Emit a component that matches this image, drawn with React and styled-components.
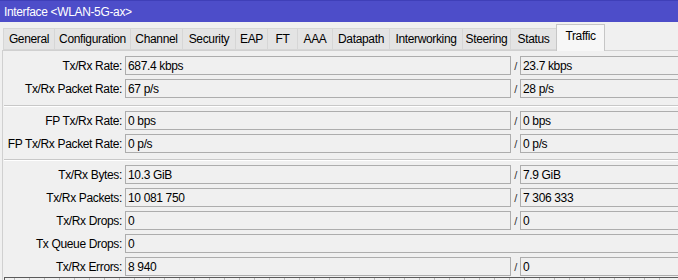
import React from "react";
import styled, { createGlobalStyle } from "styled-components";

const Global = createGlobalStyle`
  html, body { margin: 0; padding: 0; background: #f0f0f0; }
  body { width: 678px; height: 280px; overflow: hidden; }
  #root { width: 678px; height: 280px; overflow: hidden; }
`;

const Window = styled.div`
  width: 678px;
  height: 280px;
  background: #f0f0f0;
  font-family: "Liberation Sans", Arial, sans-serif;
  font-size: 12px;
  letter-spacing: -0.35px;
  color: #000;
  display: flex;
  flex-direction: column;
  overflow: hidden;
`;

const TitleBar = styled.div`
  height: 22px;
  flex: none;
  box-sizing: border-box;
  background: #4d4dc9;
  border-top: 1px solid #3f3fb8;
  color: #fff;
  display: flex;
  align-items: center;
  padding-left: 4px;
  font-size: 12px;
`;

const TabStrip = styled.div`
  height: 28px;
  flex: none;
  display: flex;
  align-items: flex-end;
  padding-left: 4px;
`;

const Tab = styled.div`
  box-sizing: border-box;
  width: ${(p) => p.$w}px;
  height: ${(p) => (p.$active ? 27 : 22)}px;
  margin-bottom: ${(p) => (p.$active ? -1 : 0)}px;
  position: relative;
  z-index: ${(p) => (p.$active ? 2 : 1)};
  display: flex;
  align-items: center;
  justify-content: center;
  padding-bottom: ${(p) => (p.$active ? 4 : 0)}px;
  background: ${(p) => (p.$active ? "#f7f7f7" : "#e4e4e4")};
  border: 1px solid ${(p) => (p.$active ? "#c6c6c6" : "#d6d6d6")};
  border-bottom: ${(p) => (p.$active ? "none" : "1px solid #d6d6d6")};
  margin-left: -1px;
  white-space: nowrap;
`;

const Panel = styled.div`
  flex: 1;
  margin-left: 2px;
  border-top: 1px solid #d0d0d0;
  border-left: 1px solid #d0d0d0;
  padding-top: 5px;
  display: flex;
  flex-direction: column;
  min-width: 0;
`;

const Group = styled.div`
  display: flex;
  flex-direction: column;
  gap: 4px;
`;

const Row = styled.div`
  display: grid;
  grid-template-columns: 122px 386px 9px 175px;
  height: 19px;
  flex: none;
  align-items: stretch;
`;

const Label = styled.div`
  text-align: right;
  padding-right: 3px;
  display: flex;
  align-items: center;
  justify-content: flex-end;
  white-space: nowrap;
`;

const Field = styled.div`
  box-sizing: border-box;
  border: 1px solid #adadad;
  background: #f0f0f0;
  padding-left: 2px;
  display: flex;
  align-items: center;
  white-space: nowrap;
  overflow: hidden;
  grid-column: ${(p) => (p.$wide ? "2 / 5" : "auto")};
`;

const Slash = styled.div`
  display: flex;
  align-items: center;
  justify-content: center;
  color: #333;
  font-size: 11px;
`;

const Separator = styled.div`
  height: 0;
  flex: none;
  margin: ${(p) => p.$top}px 0 4px 1px;
  border-top: 1px solid #c8c8c8;
  border-bottom: 1px solid #ffffff;
`;

const Graph = styled.div`
  margin: 1px 0 0 1px;
  height: 12px;
  flex: none;
  border-top: 1px solid #5a5a5a;
  border-left: 1px solid #5a5a5a;
  background-color: #f0f0f0;
  background-image: repeating-linear-gradient(
    to right,
    transparent 0px,
    transparent 14px,
    #b8b8b8 14px,
    #b8b8b8 15px
  );
  background-position: -5px 0;
`;

const tabs = [
  ["General", 52],
  ["Configuration", 77],
  ["Channel", 53],
  ["Security", 54],
  ["EAP", 33],
  ["FT", 31],
  ["AAA", 36],
  ["Datapath", 58],
  ["Interworking", 74],
  ["Steering", 49],
  ["Status", 47],
  ["Traffic", 49, true],
];

const groups = [
  {
    sep: 0,
    rows: [
      ["Tx/Rx Rate:", "687.4 kbps", "23.7 kbps"],
      ["Tx/Rx Packet Rate:", "67 p/s", "28 p/s"],
    ],
  },
  {
    sep: 7,
    rows: [
      ["FP Tx/Rx Rate:", "0 bps", "0 bps"],
      ["FP Tx/Rx Packet Rate:", "0 p/s", "0 p/s"],
    ],
  },
  {
    sep: 6,
    rows: [
      ["Tx/Rx Bytes:", "10.3 GiB", "7.9 GiB"],
      ["Tx/Rx Packets:", "10 081 750", "7 306 333"],
      ["Tx/Rx Drops:", "0", "0"],
      ["Tx Queue Drops:", "0", null],
      ["Tx/Rx Errors:", "8 940", "0"],
    ],
  },
];

export default function App() {
  return (
    <Window>
      <Global />
      <TitleBar>Interface &lt;WLAN-5G-ax&gt;</TitleBar>
      <TabStrip>
        {tabs.map(([name, w, active]) => (
          <Tab key={name} $w={w} $active={active}>
            {name}
          </Tab>
        ))}
      </TabStrip>
      <Panel>
        {groups.map((g, gi) => (
          <React.Fragment key={gi}>
            {g.sep > 0 && <Separator $top={g.sep} />}
            <Group>
              {g.rows.map(([label, a, b]) => (
                <Row key={label}>
                  <Label>{label}</Label>
                  {b === null ? (
                    <Field $wide>{a}</Field>
                  ) : (
                    <>
                      <Field>{a}</Field>
                      <Slash>/</Slash>
                      <Field>{b}</Field>
                    </>
                  )}
                </Row>
              ))}
            </Group>
          </React.Fragment>
        ))}
        <Graph />
      </Panel>
    </Window>
  );
}
